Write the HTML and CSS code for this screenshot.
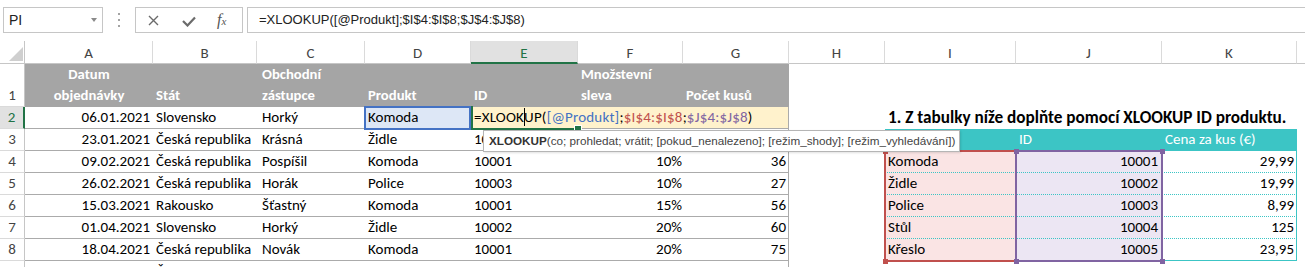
FILE: index.html
```html
<!DOCTYPE html>
<html lang="cs">
<head>
<meta charset="utf-8">
<title>XLOOKUP</title>
<link rel="stylesheet" href="styles.css">
</head>
<body>
<div class="fbar">
  <div class="namebox"><span>PI</span><span class="dd"></span></div>
  <div class="grip"><i></i><i></i><i></i></div>
  <div class="fxbox">
    <svg class="ic-x" width="11" height="11" viewBox="0 0 11 11"><path d="M1 1L10 10M10 1L1 10" stroke="#6b6b6b" stroke-width="1.4" fill="none"/></svg>
    <svg class="ic-ok" width="14" height="11" viewBox="0 0 14 11"><path d="M1 5L5.5 9.5L13 1.5" stroke="#6b6b6b" stroke-width="2.2" fill="none"/></svg>
    <span class="fx"><i>f</i><i class="fxx">x</i></span>
  </div>
  <div class="finput">=XLOOKUP([@Produkt];$I$4:$I$8;$J$4:$J$8)</div>
</div>

<div class="sheet">
  <!-- column headers -->
  <div class="corner"><i></i></div>
  <div class="ch">A</div>
  <div class="ch">B</div>
  <div class="ch">C</div>
  <div class="ch">D</div>
  <div class="ch chs">E</div>
  <div class="ch">F</div>
  <div class="ch">G</div>
  <div class="ch">H</div>
  <div class="ch">I</div>
  <div class="ch">J</div>
  <div class="ch">K</div>
  <div class="ch last"></div>

  <!-- row 1 -->
  <div class="rh rh1">1</div>
  <div class="th ctr"><span>Datum</span><span>objednávky</span></div>
  <div class="th"><span>Stát</span></div>
  <div class="th cc"><span>Obchodní</span><span>zástupce</span></div>
  <div class="th"><span>Produkt</span></div>
  <div class="th"><span>ID</span></div>
  <div class="th"><span>Množstevní</span><span>sleva</span></div>
  <div class="th"><span>Počet kusů</span></div>
  <div></div><div></div><div></div><div></div><div></div>

  <!-- row 2 -->
  <div class="rh rhs">2</div>
  <div class="td r">06.01.2021</div>
  <div class="td">Slovensko</div>
  <div class="td cc">Horký</div>
  <div class="td dsel">Komoda</div>
  <div class="td edit">=XLOOK<span class="caret"></span>UP(<span class="fb">[@Produkt]</span>;<span class="fr">$I$4:$I$8</span>;<span class="fp">$J$4:$J$8</span>)</div>
  <div></div>
  <div class="title">1. Z tabulky níže doplňte pomocí XLOOKUP ID produktu.</div>
  <div></div><div></div><div></div>

  <!-- row 3 -->
  <div class="rh">3</div>
  <div class="td r">23.01.2021</div>
  <div class="td">Česká republika</div>
  <div class="td cc">Krásná</div>
  <div class="td">Židle</div>
  <div class="td">10002</div>
  <div class="td rf"></div>
  <div class="td rg"></div>
  <div></div>
  <div class="tt"></div>
  <div class="tt">ID</div>
  <div class="tt">Cena za kus (€)</div>
  <div></div>

  <!-- row 4 -->
  <div class="rh">4</div>
  <div class="td r">09.02.2021</div>
  <div class="td">Česká republika</div>
  <div class="td cc">Pospíšil</div>
  <div class="td">Komoda</div>
  <div class="td">10001</div>
  <div class="td rf">10%</div>
  <div class="td rg">36</div>
  <div></div>
  <div class="ti">Komoda</div>
  <div class="tj">10001</div>
  <div class="tk">29,99</div>
  <div></div>

  <!-- row 5 -->
  <div class="rh">5</div>
  <div class="td r">26.02.2021</div>
  <div class="td">Česká republika</div>
  <div class="td cc">Horák</div>
  <div class="td">Police</div>
  <div class="td">10003</div>
  <div class="td rf">10%</div>
  <div class="td rg">27</div>
  <div></div>
  <div class="ti">Židle</div>
  <div class="tj">10002</div>
  <div class="tk">19,99</div>
  <div></div>

  <!-- row 6 -->
  <div class="rh">6</div>
  <div class="td r">15.03.2021</div>
  <div class="td">Rakousko</div>
  <div class="td cc">Šťastný</div>
  <div class="td">Komoda</div>
  <div class="td">10001</div>
  <div class="td rf">15%</div>
  <div class="td rg">56</div>
  <div></div>
  <div class="ti">Police</div>
  <div class="tj">10003</div>
  <div class="tk">8,99</div>
  <div></div>

  <!-- row 7 -->
  <div class="rh">7</div>
  <div class="td r">01.04.2021</div>
  <div class="td">Slovensko</div>
  <div class="td cc">Horký</div>
  <div class="td">Židle</div>
  <div class="td">10002</div>
  <div class="td rf">20%</div>
  <div class="td rg">60</div>
  <div></div>
  <div class="ti">Stůl</div>
  <div class="tj">10004</div>
  <div class="tk">125</div>
  <div></div>

  <!-- row 8 -->
  <div class="rh">8</div>
  <div class="td r">18.04.2021</div>
  <div class="td">Česká republika</div>
  <div class="td cc">Novák</div>
  <div class="td">Komoda</div>
  <div class="td">10001</div>
  <div class="td rf">20%</div>
  <div class="td rg">75</div>
  <div></div>
  <div class="ti lastrow">Křeslo</div>
  <div class="tj lastrow">10005</div>
  <div class="tk lastrow">23,95</div>
  <div></div>

  <!-- row 9 (cut by the window edge) -->
  <div class="rh"></div>
  <div class="td"></div>
  <div class="td">Č</div>
  <div class="td cc"></div>
  <div class="td"></div>
  <div class="td"></div>
  <div class="td rf"></div>
  <div class="td rg"></div>
  <div></div><div></div><div></div><div></div><div></div>

  <!-- overlays -->
  <div class="rng rng-d"></div>
  <div class="sel"></div>
  <div class="rng rng-i"><b class="h tl"></b><b class="h tr"></b><b class="h bl"></b><b class="h br"></b></div>
  <div class="rng rng-j"><b class="h tl"></b><b class="h tr"></b><b class="h bl"></b><b class="h br"></b></div>
  <div class="tip"><b>XLOOKUP</b>(co; prohledat; vrátit; [pokud_nenalezeno]; [režim_shody]; [režim_vyhledávání])</div>
</div>
</body>
</html>
```

FILE: styles.css
```css
* { box-sizing: border-box; }
html, body { margin: 0; padding: 0; }
body {
  width: 1305px;
  height: 267px;
  overflow: hidden;
  background: #fff;
  font-family: "Carlito", "Liberation Sans", Arial, sans-serif;
  font-size: 15px;
  color: #000;
}

/* formula bar */
.fbar {
  height: 41px;
  display: flex;
  align-items: flex-start;
  padding-top: 7px;
  font-family: "Liberation Sans", Arial, sans-serif;
}
.namebox {
  margin-left: 3px;
  width: 100px;
  height: 26px;
  border: 1px solid #c6c6c6;
  display: flex;
  align-items: center;
  justify-content: space-between;
  padding: 0 5px 0 5px;
  font-size: 14px;
  color: #222;
}
.dd {
  width: 0;
  height: 0;
  border-left: 3.5px solid transparent;
  border-right: 3.5px solid transparent;
  border-top: 4px solid #8a8a8a;
}
.grip {
  width: 32px;
  height: 26px;
  display: flex;
  flex-direction: column;
  align-items: center;
  justify-content: center;
  gap: 4px;
}
.grip i { display: block; width: 2px; height: 2px; background: #a3a3a3; }
.fxbox {
  width: 108px;
  height: 26px;
  border: 1px solid #c6c6c6;
  display: flex;
  align-items: center;
}
.ic-x { margin-left: 12px; margin-top: 1px; }
.ic-ok { margin-left: 23px; margin-top: 2px; }
.fx {
  margin-left: 21px;
  font-family: "Liberation Serif", serif;
  color: #555;
  font-size: 16px;
  line-height: 16px;
}
.fxx { font-size: 11px; }
.finput {
  margin-left: 4px;
  flex: 1;
  height: 26px;
  border: 1px solid #c6c6c6;
  border-right: none;
  padding-left: 11px;
  font-size: 13px;
  line-height: 24px;
  color: #222;
  white-space: nowrap;
}

/* sheet grid */
.sheet {
  position: relative;
  display: grid;
  grid-template-columns: 25px 128px 104px 108px 106px 107px 105px 106px 96px 131px 146px 135px 8px;
  grid-template-rows: 23px 43px repeat(8, 22px);
}
.sheet > div { white-space: nowrap; line-height: 21px; }

.corner {
  border-right: 1px solid #c6c6c6;
  border-bottom: 1px solid #c6c6c6;
  display: flex;
  align-items: flex-end;
  justify-content: flex-end;
  padding: 0 1px 2px 0;
}
.corner i {
  display: block;
  width: 0;
  height: 0;
  border-left: 14px solid transparent;
  border-bottom: 14px solid #cfcfcf;
}
.ch {
  border-right: 1px solid #dadada;
  border-bottom: 1px solid #c6c6c6;
  text-align: center;
  color: #444;
  padding-top: 3px;
  line-height: 19px !important;
}
.ch.last { border-right: none; }
.ch.chs {
  background: #e1e1e1;
  color: #217346;
  border-bottom: 2px solid #217346;
}
.rh {
  border-right: 1px solid #c6c6c6;
  border-bottom: 1px solid #dadada;
  text-align: center;
  color: #444;
}
.rh1 { padding-top: 21px; }
.rhs {
  background: #e1e1e1;
  color: #217346;
  border-right: 2px solid #217346;
}

/* main table */
.th {
  background: #a5a5a5;
  color: #fff;
  font-weight: bold;
  font-size: 14.7px;
  display: flex;
  flex-direction: column;
  justify-content: flex-end;
  padding: 0 3px 1px 3px;
}
.th.ctr { align-items: center; }
.td {
  border-bottom: 1px solid #ababab;
  padding: 0 3px;
}
.cc { padding-left: 5px !important; }
.r { text-align: right; }
.rf { text-align: right; padding-right: 1px; }
.rg { text-align: right; padding-right: 2px; border-right: 1px solid #ababab; }
.dsel { background: #dde7f6; }
.edit {
  grid-column: span 3;
  background: #fff2cc;
  border-right: 1px solid #ababab;
  letter-spacing: 0.2px;
}
.caret {
  display: inline-block;
  width: 0;
  height: 18px;
  border-left: 1px solid #000;
  margin-right: -1px;
  vertical-align: -4px;
}
.fb { color: #4472c4; }
.fr { color: #c0504d; }
.fp { color: #8064a2; }

/* lookup table */
.title {
  font-weight: bold;
  font-size: 17.2px;
  padding-left: 3px;
}
.tt {
  background: #3cc5c5;
  color: #fff;
  padding: 0 3px;
}
.ti {
  background: #fae4e4;
  padding: 0 3px;
  border-bottom: 1px dotted #3cc5c5;
}
.tj {
  background: #ece6f3;
  text-align: right;
  padding-right: 4px;
  border-bottom: 1px dotted #3cc5c5;
}
.tk {
  text-align: right;
  padding-right: 2px;
  border-right: 1px solid #3cc5c5;
  border-bottom: 1px dotted #3cc5c5;
}
.lastrow { border-bottom: 1px solid #3cc5c5; }

/* overlays (placed on grid areas) */
.rng, .sel { position: absolute; }
.rng-d {
  grid-column: 5 / 6;
  grid-row: 3 / 4;
  top: -1px; left: -1px; right: 0; bottom: -1px;
  border: 2px solid #4472c4;
}
.sel {
  grid-column: 6 / 7;
  grid-row: 3 / 4;
  top: -1px; left: 0; right: 0; bottom: -1px;
  border-left: 2px solid #217346;
  border-bottom: 2px solid #217346;
  z-index: 2;
}
.sel::after {
  content: "";
  position: absolute;
  right: -4px;
  bottom: -5px;
  width: 6px;
  height: 6px;
  background: #217346;
  border: 1px solid #fff;
}
.rng-i {
  grid-column: 10 / 11;
  grid-row: 5 / 10;
  top: -1px; left: -1px; right: -1px; bottom: -1px;
  border: 2px solid #c0504d;
  z-index: 2;
}
.rng-j {
  grid-column: 11 / 12;
  grid-row: 5 / 10;
  top: -1px; left: -1px; right: -1px; bottom: -1px;
  border: 2px solid #8064a2;
  z-index: 3;
}
.h {
  position: absolute;
  width: 5px;
  height: 5px;
  background: currentColor;
}
.rng-i .h { color: #c0504d; }
.rng-j .h { color: #8064a2; }
.h.tl { top: -3.5px; left: -3.5px; }
.h.tr { top: -3.5px; right: -3.5px; }
.h.bl { bottom: -3.5px; left: -3.5px; }
.h.br { bottom: -3.5px; right: -3.5px; }

.tip {
  position: absolute;
  grid-column: 6 / 7;
  grid-row: 4 / 5;
  left: 12px;
  top: 1px;
  width: max-content;
  height: 22px;
  border: 1px solid #b5b5b5;
  background: #fff;
  padding: 0 4px 0 5px;
  font-family: "Liberation Sans", Arial, sans-serif;
  font-size: 11.7px;
  line-height: 20px !important;
  color: #444;
  z-index: 5;
  box-shadow: 1px 1px 2px rgba(0, 0, 0, 0.12);
}
.tip b { color: #333; }
```
